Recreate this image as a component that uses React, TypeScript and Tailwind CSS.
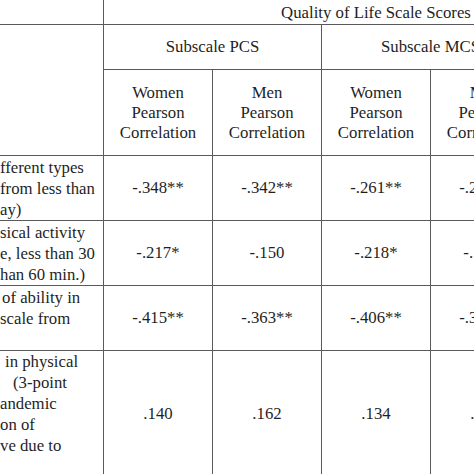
export default function App() {
  const cell = "border-r border-b border-[#5a5a5a] flex items-center justify-center text-center"
  const rows = [
    { lines: [["fferent types", ""], ["from less than", ""], ["ay)", ""]], vals: ["-.348**", "-.342**", "-.261**", "-.253**", ""] },
    { lines: [["sical activity", ""], ["e, less than 30", ""], ["han 60 min.)", ""]], vals: ["-.217*", "-.150", "-.218*", "-.196*", ""] },
    { lines: [["of ability in", "pl-[2px]"], ["scale from", ""], ["\u00a0", ""]], vals: ["-.415**", "-.363**", "-.406**", "-.371**", ""] },
    {
      lines: [["in physical", "pl-[5px]"], ["(3-point", "pl-[13px]"], ["andemic", ""], ["on of", ""], ["ve due to", ""], ["\u00a0", ""]],
      vals: [".140", ".162", ".134", ".128", ""],
    },
  ]

  return (
    <div className="w-[474px] h-[474px] overflow-hidden bg-white text-[#1f1f1f] font-['Liberation_Serif',serif] text-[16.75px]">
      <div className="grid w-[649px] grid-cols-[104px_109px_109px_109px_109px_109px] grid-rows-[25px_45px_86px_65px_65px_65px_126px]">
        {/* header rows */}
        <div className="border-r border-b border-[#5a5a5a]" />
        <div className={`${cell} col-span-5 leading-none pt-[2px]`}>Quality of Life Scale Scores</div>

        <div className="border-r border-b border-[#5a5a5a] row-span-2" />
        <div className={`${cell} col-span-2`}>Subscale PCS</div>
        <div className={`${cell} col-span-2`}>Subscale MCS</div>
        <div className={cell}>Total</div>

        {["Women", "Men", "Women", "Men", "Total"].map((g, i) => (
          <div key={i} className={`${cell} flex-col leading-[20px]`}>
            <span>{g}</span>
            <span>Pearson</span>
            <span>Correlation</span>
          </div>
        ))}

        {rows.map((r, i) => [
          <div key={`l${i}`} className="border-r border-b border-[#5a5a5a] flex flex-col justify-center leading-[21px] whitespace-nowrap overflow-hidden">
            {r.lines.map(([t, pad], j) => (
              <div key={j} className={pad}>{t}</div>
            ))}
          </div>,
          ...r.vals.map((v, j) => (
            <div key={`v${i}-${j}`} className={cell}>{v}</div>
          )),
        ])}
      </div>
    </div>
  )
}
